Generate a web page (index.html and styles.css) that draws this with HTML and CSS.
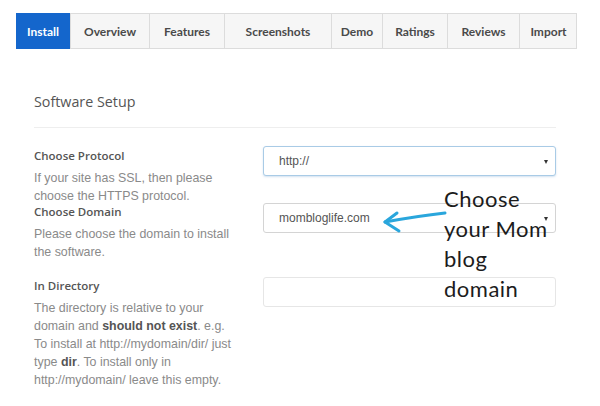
FILE: index.html
```html
<!DOCTYPE html>
<html lang="en">
<head>
  <meta charset="UTF-8">
  <title>Install - Software Setup</title>
  <link rel="stylesheet" href="styles.css">
</head>
<body>
  <div class="page">
    <ul class="tabs">
      <li class="tab active">Install</li>
      <li class="tab">Overview</li>
      <li class="tab">Features</li>
      <li class="tab">Screenshots</li>
      <li class="tab">Demo</li>
      <li class="tab">Ratings</li>
      <li class="tab">Reviews</li>
      <li class="tab">Import</li>
    </ul>

    <div class="setup">
      <h2 class="setup-title">Software Setup</h2>

      <div class="field">
        <div class="field-info">
          <div class="field-label">Choose Protocol</div>
          <div class="field-desc">If your site has SSL, then please choose the HTTPS protocol.</div>
        </div>
        <div class="select focused"><span>http://</span></div>
      </div>

      <div class="field field-domain">
        <div class="field-info">
          <div class="field-label">Choose Domain</div>
          <div class="field-desc">Please choose the domain to install the software.</div>
        </div>
        <div class="select"><span>mombloglife.com</span></div>
      </div>

      <div class="field field-dir">
        <div class="field-info">
          <div class="field-label">In Directory</div>
          <div class="field-desc">The directory is relative to your domain and <b>should not exist</b>. e.g. To install at http://mydomain/dir/ just type <b>dir</b>. To install only in http://mydomain/ leave this empty.</div>
        </div>
        <div class="text-input"></div>
      </div>
    </div>

    <!-- annotation drawn over the screenshot -->
    <svg class="note-arrow" viewBox="0 0 70 30" width="70" height="30">
      <path d="M63 7 C45 9 25 12 3 16" />
      <path d="M15 7 L3 16 L17 25" />
    </svg>
    <div class="note">Choose<br>your Mom<br>blog<br>domain</div>
  </div>
</body>
</html>
```

FILE: styles.css
```css
* {
  margin: 0;
  padding: 0;
  box-sizing: border-box;
}

body {
  background: #fff;
  font-family: 'Liberation Sans', Arial, sans-serif;
  width: 600px;
  height: 406px;
  overflow: hidden;
}

.page {
  position: relative;
  height: 100%;
  padding-top: 13px;
}

.tabs {
  list-style: none;
  margin-left: 16px;
  display: grid;
  grid-template-columns: 53px 79px 75px 107px 51px 65px 72px 58px;
  border: 1px solid #dcdcdc;
  width: 561px;
  height: 36px;
  background: #f6f6f6;
}

.tab {
  display: flex;
  align-items: center;
  justify-content: center;
  font-family: Lato, 'Liberation Sans', sans-serif;
  font-weight: 700;
  font-size: 12px;
  color: #4a4a4a;
  border-left: 1px solid #dcdcdc;
}

.tab:first-child {
  border-left: none;
}

.tab.active {
  background: #1466cc;
  color: #fff;
  margin: -1px 0 -1px -1px;
}

.setup {
  margin: 0 44px 0 34px;
  padding-top: 43px;
}

.setup-title {
  font-family: 'Open Sans', sans-serif;
  font-weight: 400;
  font-size: 14.3px;
  color: #555;
  line-height: 20px;
  padding-bottom: 15px;
  border-bottom: 1px solid #eeeeee;
  margin-bottom: 18px;
}

.field {
  display: grid;
  grid-template-columns: 216px 293px;
  column-gap: 13px;
}

.field-domain {
  margin-top: -3px;
}

.field-dir {
  margin-top: 15px;
}

.field-label {
  font-family: 'Open Sans', sans-serif;
  font-weight: 600;
  font-size: 11.5px;
  color: #555;
  line-height: 20px;
  margin-bottom: 3px;
}

.field-desc {
  font-size: 12.4px;
  color: #8a8a8a;
  line-height: 18px;
  padding-right: 14px;
}

.field-desc b {
  color: #555;
}

.select,
.text-input {
  position: relative;
  height: 30px;
  border: 1px solid #d4d4d4;
  border-radius: 3px;
  background: #fff;
  display: flex;
  align-items: center;
  padding-left: 15px;
  font-size: 12px;
  color: #555;
}

.field-domain .select,
.field-dir .text-input {
  margin-top: 1px;
}

.select.focused {
  border-color: #a9cbe6;
  box-shadow: 0 1px 2px rgba(80, 140, 200, 0.25);
}

.select::after {
  content: '';
  position: absolute;
  right: 7px;
  top: 13px;
  border-left: 2.5px solid transparent;
  border-right: 2.5px solid transparent;
  border-top: 4px solid #333;
}

.text-input {
  border-color: #e6e6e6;
}

.note {
  position: absolute;
  left: 444px;
  top: 184px;
  font-family: Lato, 'DejaVu Sans', sans-serif;
  font-size: 22px;
  line-height: 30px;
  color: #1c1c1c;
  letter-spacing: 0.5px;
}

.note-arrow {
  position: absolute;
  left: 382px;
  top: 206px;
  fill: none;
  stroke: #2aa6dc;
  stroke-width: 3;
  stroke-linecap: round;
  stroke-linejoin: round;
}
```
